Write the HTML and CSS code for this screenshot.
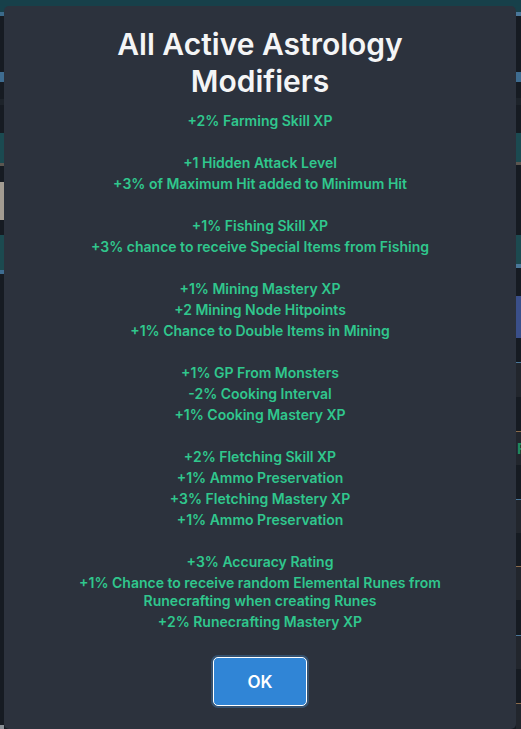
FILE: index.html
```html
<!DOCTYPE html>
<html lang="en">
<head>
<meta charset="utf-8">
<title>All Active Astrology Modifiers</title>
<link rel="stylesheet" href="styles.css">
</head>
<body>
<div class="page">
  <div class="strip strip-left"></div>
  <div class="center">
    <div class="modal">
      <h2 class="title">All Active Astrology Modifiers</h2>
      <div class="mods">
        <div class="group">
          <div class="mod">+2% Farming Skill XP</div>
        </div>
        <div class="group">
          <div class="mod">+1 Hidden Attack Level</div>
          <div class="mod">+3% of Maximum Hit added to Minimum Hit</div>
        </div>
        <div class="group">
          <div class="mod">+1% Fishing Skill XP</div>
          <div class="mod">+3% chance to receive Special Items from Fishing</div>
        </div>
        <div class="group">
          <div class="mod">+1% Mining Mastery XP</div>
          <div class="mod">+2 Mining Node Hitpoints</div>
          <div class="mod">+1% Chance to Double Items in Mining</div>
        </div>
        <div class="group">
          <div class="mod">+1% GP From Monsters</div>
          <div class="mod">-2% Cooking Interval</div>
          <div class="mod">+1% Cooking Mastery XP</div>
        </div>
        <div class="group">
          <div class="mod">+2% Fletching Skill XP</div>
          <div class="mod">+1% Ammo Preservation</div>
          <div class="mod">+3% Fletching Mastery XP</div>
          <div class="mod">+1% Ammo Preservation</div>
        </div>
        <div class="group">
          <div class="mod">+3% Accuracy Rating</div>
          <div class="mod">+1% Chance to receive random Elemental Runes from Runecrafting when creating Runes</div>
          <div class="mod">+2% Runecrafting Mastery XP</div>
        </div>
      </div>
      <div class="actions">
        <button class="ok" type="button">OK</button>
      </div>
    </div>
  </div>
  <div class="strip strip-right"><span class="peek">F</span></div>
</div>
</body>
</html>
```

FILE: styles.css
```css
* { box-sizing: border-box; }

html, body {
  margin: 0;
  padding: 0;
  background: #161b22;
  font-family: "Inter", "Noto Sans", sans-serif;
}

.page {
  display: grid;
  grid-template-columns: 4px 512px 1fr;
  height: 729px;
  overflow: hidden;
}

.strip { height: 729px; overflow: hidden; }

.strip-left {
  background: linear-gradient(to bottom,
    #17404a 0 12px,
    #3b6a8a 12px 16px,
    #161b22 16px 72px,
    #3e6c90 72px 82px,
    #161b22 82px 99px,
    #1d232a 99px 105px,
    #161b22 105px 133px,
    #1b4a51 133px 163px,
    #5b5650 163px 166px,
    #161b22 166px 182px,
    #a39c92 182px 220px,
    #161b22 220px 235px,
    #1c4a50 235px 270px,
    #3e6c90 270px 274px,
    #161b22 274px 725px,
    #8a9096 725px);
}

.strip-right {
  padding-top: 440px;
  padding-left: 1px;
  background: linear-gradient(to bottom,
    #17404a 0 12px,
    #4a7799 12px 16px,
    #161b22 16px 72px,
    #3e6c90 72px 82px,
    #161b22 82px 98px,
    #1d232a 98px 105px,
    #161b22 105px 133px,
    #1b4a51 133px 162px,
    #5b5650 162px 165px,
    #161b22 165px 235px,
    #1c4a50 235px 264px,
    #4a7799 264px 268px,
    #161b22 268px 296px,
    #3a4f8a 296px 338px,
    #161b22 338px 362px,
    #4a7799 362px 363px,
    #22262d 363px 397px,
    #161b22 397px 431px,
    #8a6a4a 431px 432px,
    #22262d 432px 465px,
    #161b22 465px 499px,
    #4a7799 499px 500px,
    #22262d 500px 533px,
    #161b22 533px 566px,
    #8a6a4a 566px 567px,
    #22262d 567px 600px,
    #161b22 600px 635px,
    #4a7799 635px 636px,
    #22262d 636px 669px,
    #161b22 669px 703px,
    #8a6a4a 703px 704px,
    #22262d 704px);
}

.peek {
  display: block;
  font-weight: 700;
  font-size: 15px;
  line-height: 18px;
  color: #1f8a5e;
}

.center {
  padding-top: 6px;
  background: linear-gradient(to bottom, #17404a 0 12px, #161b22 12px);
}

.modal {
  height: 723px;
  background: #2c323d;
  border-radius: 5px;
  display: flex;
  flex-direction: column;
  align-items: stretch;
  padding-top: 20px;
}

.title {
  margin: 0;
  padding: 0 66px;
  font-size: 30px;
  line-height: 37px;
  font-weight: 600;
  color: #f4f5f6;
  text-align: center;
}

.mods {
  margin-top: 12px;
  padding: 0 40px;
  display: flex;
  flex-direction: column;
  gap: 24px;
}

.group {
  display: flex;
  flex-direction: column;
  gap: 3px;
}

.mod {
  font-size: 14px;
  line-height: 18px;
  font-weight: 600;
  color: #30c78d;
  text-align: center;
}

.actions {
  margin-top: 26px;
  display: flex;
  justify-content: center;
}

.ok {
  width: 94px;
  height: 49px;
  background: #3085d6;
  color: #ffffff;
  border: 1px solid #ffffff;
  border-radius: 5px;
  box-shadow: 0 0 0 2px rgba(64, 120, 170, 0.45);
  font-family: "Inter", "Noto Sans", sans-serif;
  font-size: 17px;
  font-weight: 600;
  cursor: pointer;
}
```
